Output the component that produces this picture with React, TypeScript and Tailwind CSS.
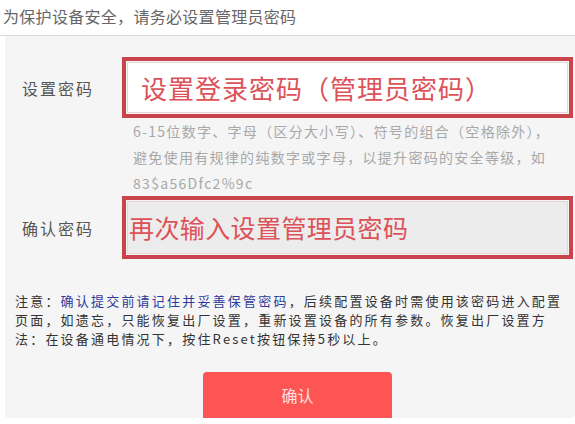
import React from 'react';

// ─── Password setup panel ──────────────────────────────────────────────────

const FONT = { fontFamily: '"Noto Sans CJK SC", "Noto Sans", sans-serif' };

function Field({
  label,
  text,
  inner,
  height,
  textClass,
}: {
  label: string;
  text: string;
  inner: string;
  height: string;
  textClass: string;
}) {
  return (
    <div className="flex items-center">
      <div className="w-[117px] pl-[17px] text-[16px] tracking-[2px] text-[#555]">{label}</div>
      <div className={`w-[451px] ${height} border-[4px] border-[#c9444c] p-px`}>
        <div className={`h-full w-full flex items-center border border-[#e6d6d6] ${inner}`}>
          <span className={`whitespace-nowrap text-[#dc5258] ${textClass}`}>{text}</span>
        </div>
      </div>
    </div>
  );
}

export default function App() {
  return (
    <div className="w-[575px] h-[424px] bg-white overflow-hidden" style={FONT}>
      {/* header */}
      <div className="h-[36px] pt-[4px] pl-[3px] border-b border-[#dcdcdc] text-[16px] tracking-[0.3px] text-[#666] whitespace-nowrap">
        为保护设备安全，请务必设置管理员密码
      </div>

      {/* panel */}
      <div className="ml-[5px] h-[382px] bg-[#f5f5f5] rounded-b-[4px] flex flex-col pt-[21px]">
        <Field
          label="设置密码"
          text="设置登录密码（管理员密码）"
          inner="bg-white pl-[13px]"
          height="h-[61px]"
          textClass="text-[26px] tracking-[1px]"
        />

        <div className="pl-[128px] text-[14px] leading-[26px] tracking-[1.3px] text-[#a8a8a8] whitespace-nowrap">
          <div>6-15位数字、字母（区分大小写）、符号的组合（空格除外），</div>
          <div>避免使用有规律的纯数字或字母，以提升密码的安全等级，如</div>
          <div>83$a56Dfc2%9c</div>
        </div>

        <Field
          label="确认密码"
          text="再次输入设置管理员密码"
          inner="bg-[#ececec] pl-[1px]"
          height="h-[63px]"
          textClass="text-[25px] tracking-[0.4px]"
        />

        <div className="mt-[32px] pl-[10px] text-[13px] leading-[19px] tracking-[2.2px] text-[#333] whitespace-nowrap">
          <div>
            注意：<span className="text-[#2b3a9c]">确认提交前请记住并妥善保管密码</span>，后续配置设备时需使用该密码进入配置
          </div>
          <div>页面，如遗忘，只能恢复出厂设置，重新设置设备的所有参数。恢复出厂设置方</div>
          <div>法：在设备通电情况下，按住Reset按钮保持5秒以上。</div>
        </div>

        <div className="mt-auto ml-[198px] w-[189px] h-[46px] bg-[#fd5454] rounded-t-[4px] flex items-center justify-center text-[16px] text-[#ffe0e0]">
          确认
        </div>
      </div>
    </div>
  );
}
